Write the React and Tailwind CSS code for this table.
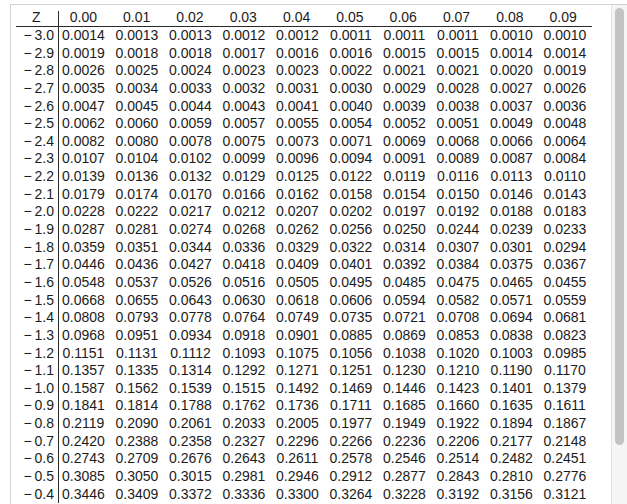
import React from "react";

const HEAD = ["0.00","0.01","0.02","0.03","0.04","0.05","0.06","0.07","0.08","0.09"];

const RAW = `-3.0 0.0014 0.0013 0.0013 0.0012 0.0012 0.0011 0.0011 0.0011 0.0010 0.0010
-2.9 0.0019 0.0018 0.0018 0.0017 0.0016 0.0016 0.0015 0.0015 0.0014 0.0014
-2.8 0.0026 0.0025 0.0024 0.0023 0.0023 0.0022 0.0021 0.0021 0.0020 0.0019
-2.7 0.0035 0.0034 0.0033 0.0032 0.0031 0.0030 0.0029 0.0028 0.0027 0.0026
-2.6 0.0047 0.0045 0.0044 0.0043 0.0041 0.0040 0.0039 0.0038 0.0037 0.0036
-2.5 0.0062 0.0060 0.0059 0.0057 0.0055 0.0054 0.0052 0.0051 0.0049 0.0048
-2.4 0.0082 0.0080 0.0078 0.0075 0.0073 0.0071 0.0069 0.0068 0.0066 0.0064
-2.3 0.0107 0.0104 0.0102 0.0099 0.0096 0.0094 0.0091 0.0089 0.0087 0.0084
-2.2 0.0139 0.0136 0.0132 0.0129 0.0125 0.0122 0.0119 0.0116 0.0113 0.0110
-2.1 0.0179 0.0174 0.0170 0.0166 0.0162 0.0158 0.0154 0.0150 0.0146 0.0143
-2.0 0.0228 0.0222 0.0217 0.0212 0.0207 0.0202 0.0197 0.0192 0.0188 0.0183
-1.9 0.0287 0.0281 0.0274 0.0268 0.0262 0.0256 0.0250 0.0244 0.0239 0.0233
-1.8 0.0359 0.0351 0.0344 0.0336 0.0329 0.0322 0.0314 0.0307 0.0301 0.0294
-1.7 0.0446 0.0436 0.0427 0.0418 0.0409 0.0401 0.0392 0.0384 0.0375 0.0367
-1.6 0.0548 0.0537 0.0526 0.0516 0.0505 0.0495 0.0485 0.0475 0.0465 0.0455
-1.5 0.0668 0.0655 0.0643 0.0630 0.0618 0.0606 0.0594 0.0582 0.0571 0.0559
-1.4 0.0808 0.0793 0.0778 0.0764 0.0749 0.0735 0.0721 0.0708 0.0694 0.0681
-1.3 0.0968 0.0951 0.0934 0.0918 0.0901 0.0885 0.0869 0.0853 0.0838 0.0823
-1.2 0.1151 0.1131 0.1112 0.1093 0.1075 0.1056 0.1038 0.1020 0.1003 0.0985
-1.1 0.1357 0.1335 0.1314 0.1292 0.1271 0.1251 0.1230 0.1210 0.1190 0.1170
-1.0 0.1587 0.1562 0.1539 0.1515 0.1492 0.1469 0.1446 0.1423 0.1401 0.1379
-0.9 0.1841 0.1814 0.1788 0.1762 0.1736 0.1711 0.1685 0.1660 0.1635 0.1611
-0.8 0.2119 0.2090 0.2061 0.2033 0.2005 0.1977 0.1949 0.1922 0.1894 0.1867
-0.7 0.2420 0.2388 0.2358 0.2327 0.2296 0.2266 0.2236 0.2206 0.2177 0.2148
-0.6 0.2743 0.2709 0.2676 0.2643 0.2611 0.2578 0.2546 0.2514 0.2482 0.2451
-0.5 0.3085 0.3050 0.3015 0.2981 0.2946 0.2912 0.2877 0.2843 0.2810 0.2776
-0.4 0.3446 0.3409 0.3372 0.3336 0.3300 0.3264 0.3228 0.3192 0.3156 0.3121`;

const ROWS = RAW.split("\n").map((l) => {
  const p = l.trim().split(/\s+/);
  return { z: p[0].replace("-", ""), vals: p.slice(1) };
});

export default function App() {
  return (
    <div
      className="w-[627px] h-[504px] bg-white overflow-hidden pt-[4px] pl-[10px] text-[14px] text-[#1c1c1c]"
      style={{ fontFamily: '"Liberation Sans", Arial, sans-serif' }}
    >
      <div className="flex h-[500px] border-l border-t border-[#d2d2d2]">
        <div className="flex-1 flex flex-col">
          {/* header */}
          <div className="flex h-[22px] ml-[5px] w-[576px] border-b border-[#2a2a2a]">
            <div className="w-[43px] mt-[6px] border-r border-[#2a2a2a] flex items-end">
              <span className="pl-[16px] leading-[18px]">Z</span>
            </div>
            {HEAD.map((h) => (
              <div key={h} className="w-[53.5px] pl-[3px] flex items-end">
                <span className="w-[43px] text-center leading-[18px]">{h}</span>
              </div>
            ))}
          </div>
          {/* body */}
          <div className="flex flex-col">
            {ROWS.map((r) => (
              <div key={r.z} className="flex h-[17.65px] leading-[17.65px]">
                <div className="w-[48px] border-r border-[#2a2a2a] text-right pr-[4px] whitespace-nowrap">
                  {"\u2212\u2009" + r.z}
                </div>
                {r.vals.map((v, i) => (
                  <div key={i} className="w-[53.5px] pl-[3px]">
                    <span className="inline-block w-[43px] text-center">{v}</span>
                  </div>
                ))}
              </div>
            ))}
          </div>
        </div>
        {/* scrollbar */}
        <div className="w-[16px] border-l border-[#e2e2e2] bg-[#f5f5f5] pt-[3px]">
          <div className="mx-[3px] h-[437px] rounded-full bg-[#c3c3c3]" />
        </div>
      </div>
    </div>
  );
}
